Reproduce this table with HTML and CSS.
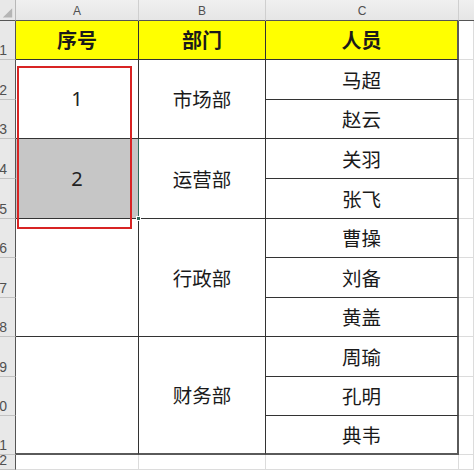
FILE: index.html
```html
<!DOCTYPE html>
<html lang="zh-CN">
<head>
<meta charset="utf-8">
<title>Sheet</title>
<link rel="stylesheet" href="styles.css">
</head>
<body>
<div class="sheet">
  <div class="corner"><svg width="16" height="21" viewBox="0 0 16 21"><polygon points="3,18 13,18 13,8" fill="#b5b5b5"/></svg></div>
  <div class="colhead">A</div>
  <div class="colhead">B</div>
  <div class="colhead">C</div>
  <div class="colhead colhead-last"></div>

  <div class="rowhead" style="grid-row:2"><span>1</span></div>
  <div class="cell head" style="grid-row:2;grid-column:2">序号</div>
  <div class="cell head" style="grid-row:2;grid-column:3">部门</div>
  <div class="cell head c" style="grid-row:2;grid-column:4">人员</div>
  <div class="grid-cell" style="grid-row:2;grid-column:5"></div>

  <div class="rowhead" style="grid-row:3"><span>2</span></div>
  <div class="rowhead" style="grid-row:4"><span>3</span></div>
  <div class="rowhead" style="grid-row:5"><span>4</span></div>
  <div class="rowhead" style="grid-row:6"><span>5</span></div>
  <div class="rowhead" style="grid-row:7"><span>6</span></div>
  <div class="rowhead" style="grid-row:8"><span>7</span></div>
  <div class="rowhead" style="grid-row:9"><span>8</span></div>
  <div class="rowhead" style="grid-row:10"><span>9</span></div>
  <div class="rowhead" style="grid-row:11"><span>10</span></div>
  <div class="rowhead" style="grid-row:12"><span>11</span></div>
  <div class="rowhead" style="grid-row:13"><span>12</span></div>

  <div class="cell num" style="grid-row:3 / span 2;grid-column:2">1</div>
  <div class="cell num selected" style="grid-row:5 / span 2;grid-column:2">2</div>
  <div class="cell" style="grid-row:7 / span 3;grid-column:2"></div>
  <div class="cell last" style="grid-row:10 / span 3;grid-column:2"></div>

  <div class="cell" style="grid-row:3 / span 2;grid-column:3">市场部</div>
  <div class="cell" style="grid-row:5 / span 2;grid-column:3">运营部</div>
  <div class="cell" style="grid-row:7 / span 3;grid-column:3">行政部</div>
  <div class="cell last" style="grid-row:10 / span 3;grid-column:3">财务部</div>

  <div class="cell c" style="grid-row:3;grid-column:4">马超</div>
  <div class="cell c" style="grid-row:4;grid-column:4">赵云</div>
  <div class="cell c" style="grid-row:5;grid-column:4">关羽</div>
  <div class="cell c" style="grid-row:6;grid-column:4">张飞</div>
  <div class="cell c" style="grid-row:7;grid-column:4">曹操</div>
  <div class="cell c" style="grid-row:8;grid-column:4">刘备</div>
  <div class="cell c" style="grid-row:9;grid-column:4">黄盖</div>
  <div class="cell c" style="grid-row:10;grid-column:4">周瑜</div>
  <div class="cell c" style="grid-row:11;grid-column:4">孔明</div>
  <div class="cell c last" style="grid-row:12;grid-column:4">典韦</div>

  <div class="grid-cell" style="grid-row:3;grid-column:5"></div>
  <div class="grid-cell" style="grid-row:4;grid-column:5"></div>
  <div class="grid-cell" style="grid-row:5;grid-column:5"></div>
  <div class="grid-cell" style="grid-row:6;grid-column:5"></div>
  <div class="grid-cell" style="grid-row:7;grid-column:5"></div>
  <div class="grid-cell" style="grid-row:8;grid-column:5"></div>
  <div class="grid-cell" style="grid-row:9;grid-column:5"></div>
  <div class="grid-cell" style="grid-row:10;grid-column:5"></div>
  <div class="grid-cell" style="grid-row:11;grid-column:5"></div>
  <div class="grid-cell" style="grid-row:12;grid-column:5"></div>

  <div class="grid-cell" style="grid-row:13;grid-column:2"></div>
  <div class="grid-cell" style="grid-row:13;grid-column:3"></div>
  <div class="grid-cell" style="grid-row:13;grid-column:4"></div>
  <div class="grid-cell" style="grid-row:13;grid-column:5"></div>

  <div class="sel-handle"></div>
  <div class="red-box"></div>
</div>
</body>
</html>
```
FILE: styles.css
```css
html, body {
  margin: 0;
  padding: 0;
  background: #ffffff;
  overflow: hidden;
}

.sheet {
  position: relative;
  width: 474px;
  height: 470px;
  display: grid;
  grid-template-columns: 16px 123px 127px 193px 1fr;
  grid-template-rows: 21px 39px 40px 39px 40px 40px 39px 40px 39px 40px 39px 39px 1fr;
  font-family: "Noto Sans CJK SC", "Noto Sans", sans-serif;
  color: #1a1a1a;
}

.corner {
  grid-row: 1;
  grid-column: 1;
  background: #e8e8e8;
  border-right: 1px solid #b8b8b8;
  border-bottom: 1px solid #555555;
  box-sizing: border-box;
  display: flex;
}

.colhead {
  grid-row: 1;
  background: linear-gradient(#f0f0f0, #e6e6e6);
  border-right: 1px solid #cfcfcf;
  border-bottom: 1px solid #555555;
  box-sizing: border-box;
  display: flex;
  align-items: center;
  justify-content: center;
  font-family: "Liberation Sans", "DejaVu Sans", sans-serif;
  font-size: 12px;
  color: #505050;
  padding-top: 1px;
}

.colhead-last {
  border-right: none;
}

.rowhead {
  grid-column: 1;
  background: #e8e8e8;
  border-right: 1px solid #555555;
  border-bottom: 1px solid #c2c2c2;
  box-sizing: border-box;
  display: flex;
  align-items: flex-end;
  justify-content: flex-end;
  overflow: hidden;
  white-space: nowrap;
  font-family: "Liberation Sans", "DejaVu Sans", sans-serif;
  font-size: 14px;
  color: #505050;
  padding-right: 8px;
  padding-bottom: 2px;
  line-height: 14px;
}

.cell {
  box-sizing: border-box;
  border-right: 1px solid #333333;
  border-bottom: 1px solid #333333;
  display: flex;
  align-items: center;
  justify-content: center;
  font-size: 19.5px;
  line-height: 1;
  background: #ffffff;
}

.cell.head {
  background: #ffff00;
  font-weight: 700;
  font-size: 20px;
}

.cell.num {
  font-family: "Noto Sans", "Liberation Sans", sans-serif;
  font-size: 20px;
  color: #222222;
}

.cell.selected {
  background: #c6c6c6;
  border-right-color: #2f6a5a;
}

.cell.c {
  border-right: 2px solid #5a5a5a;
}

.cell.last {
  border-bottom: 2px solid #5a5a5a;
}

.grid-cell {
  box-sizing: border-box;
  border-right: 1px solid #dcdcdc;
  border-bottom: 1px solid #dcdcdc;
}

.sel-handle {
  position: absolute;
  left: 136px;
  top: 216px;
  width: 5px;
  height: 5px;
  background: #2f6a5a;
  border: 1px solid #ffffff;
  box-sizing: border-box;
}

.red-box {
  position: absolute;
  left: 17px;
  top: 66px;
  width: 115px;
  height: 163px;
  border: 2px solid #d82424;
  box-sizing: border-box;
}
```
